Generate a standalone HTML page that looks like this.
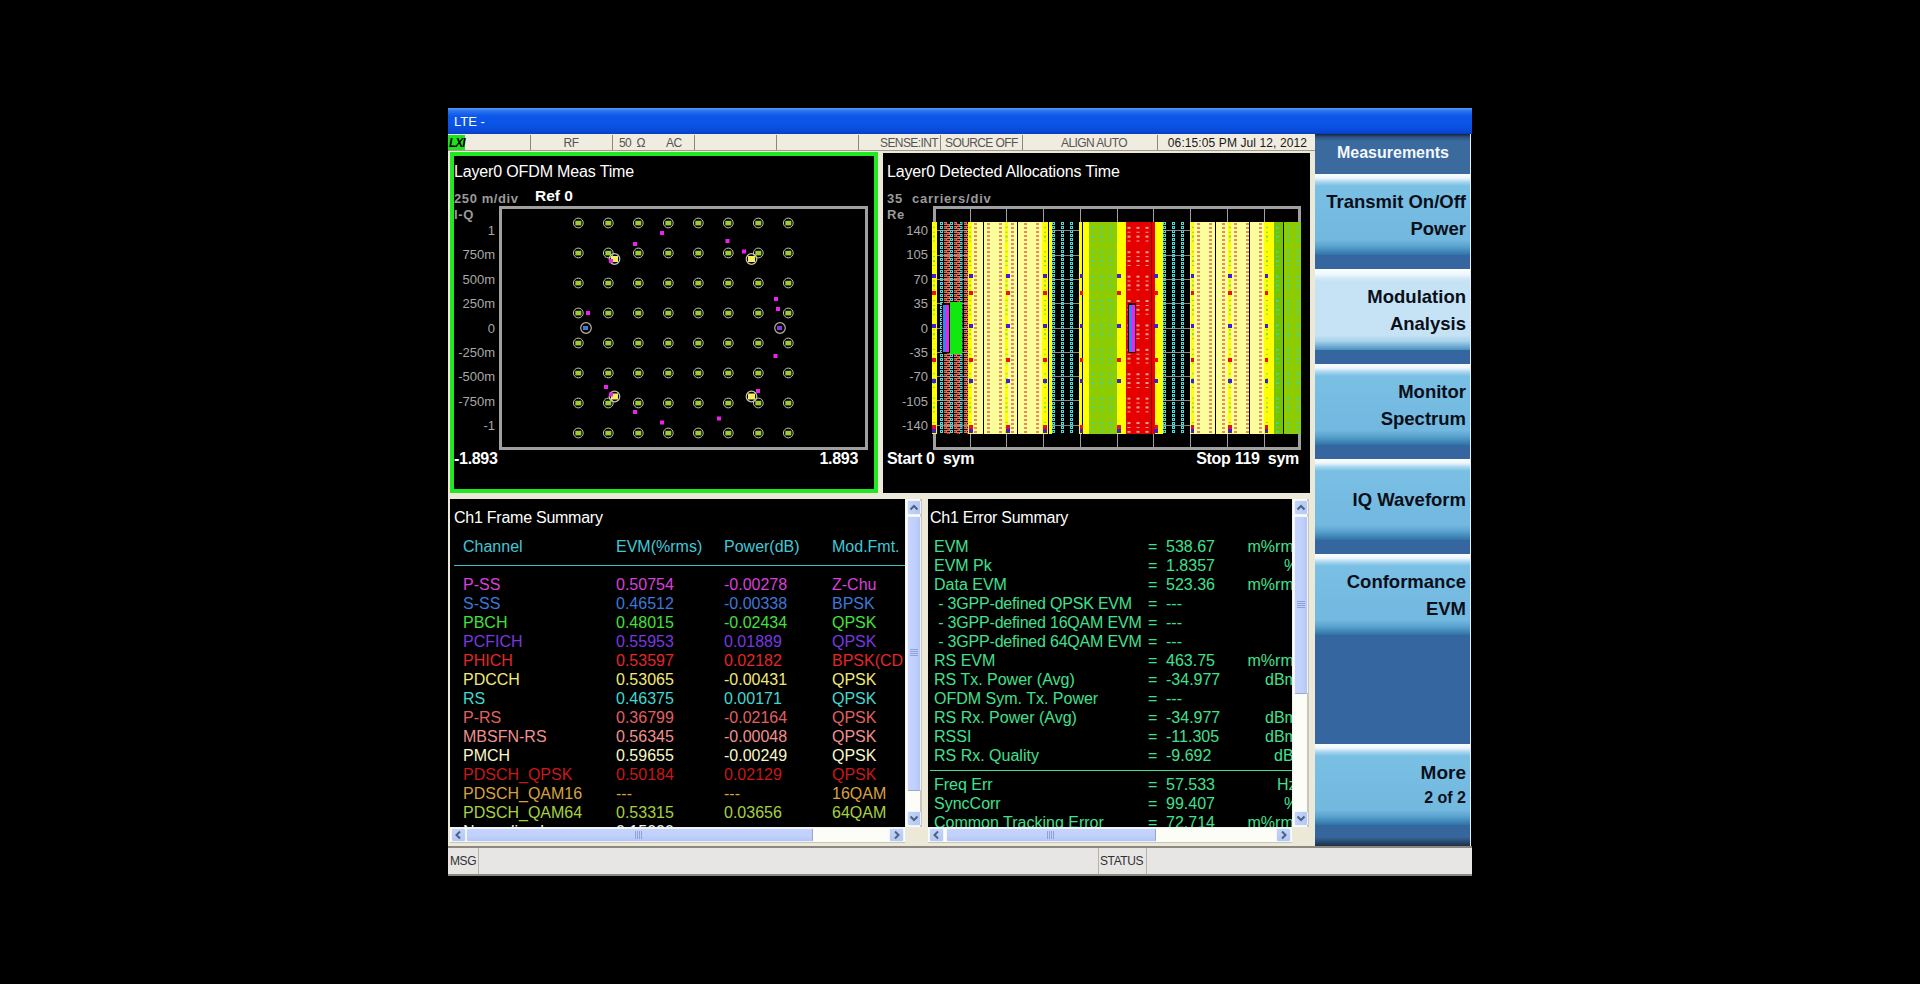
<!DOCTYPE html><html><head><meta charset="utf-8"><style>
html,body{margin:0;padding:0;background:#000;}
body{width:1920px;height:984px;position:relative;overflow:hidden;font-family:"Liberation Sans",sans-serif;}
.t{position:absolute;white-space:nowrap;}
.r{position:absolute;box-sizing:border-box;}
svg{position:absolute;}
</style></head><body>
<div class="r" style="left:448px;top:108px;width:1024px;height:26px;background:linear-gradient(#5a9af8 0px,#2a72f0 3px,#0c58ea 8px,#0a52e4 18px,#0846d4 24px,#0a3cb8 26px);"></div>
<div class="t" style="left:454px;top:115.00px;font-size:13px;line-height:13px;color:#fff;font-weight:normal;">LTE -</div>
<div class="r" style="left:448px;top:134px;width:867px;height:713px;background:#ece9d8;"></div>
<div class="r" style="left:448px;top:134px;width:867px;height:17px;background:#f1ece0;border-bottom:1px solid #a09a8c;"></div>
<div class="r" style="left:448px;top:135px;width:17px;height:15px;background:#1fe21f;"></div>
<div class="t" style="left:449px;top:136.84px;font-size:12px;line-height:12px;color:#000;font-weight:bold;letter-spacing:-1px;"><i>LXI</i></div>
<div class="r" style="left:530px;top:135px;width:1px;height:15px;background:#8c8778;"></div>
<div class="r" style="left:612px;top:135px;width:1px;height:15px;background:#8c8778;"></div>
<div class="r" style="left:694px;top:135px;width:1px;height:15px;background:#8c8778;"></div>
<div class="r" style="left:776px;top:135px;width:1px;height:15px;background:#8c8778;"></div>
<div class="r" style="left:858px;top:135px;width:1px;height:15px;background:#8c8778;"></div>
<div class="r" style="left:940px;top:135px;width:1px;height:15px;background:#8c8778;"></div>
<div class="r" style="left:1022px;top:135px;width:1px;height:15px;background:#8c8778;"></div>
<div class="r" style="left:1157px;top:135px;width:1px;height:15px;background:#8c8778;"></div>
<div class="t" style="left:371px;width:400px;text-align:center;top:136.84px;font-size:12px;line-height:12px;color:#555;font-weight:normal;letter-spacing:-0.6px;">RF</div>
<div class="t" style="left:619px;top:136.84px;font-size:12px;line-height:12px;color:#555;font-weight:normal;letter-spacing:-0.6px;">50&nbsp; Ω</div>
<div class="t" style="left:666px;top:136.84px;font-size:12px;line-height:12px;color:#555;font-weight:normal;letter-spacing:-0.6px;">AC</div>
<div class="t" style="right:982px;top:136.84px;font-size:12px;line-height:12px;color:#555;font-weight:normal;letter-spacing:-0.6px;">SENSE:INT</div>
<div class="t" style="left:945px;top:136.84px;font-size:12px;line-height:12px;color:#555;font-weight:normal;letter-spacing:-0.6px;">SOURCE OFF</div>
<div class="t" style="left:894px;width:400px;text-align:center;top:136.84px;font-size:12px;line-height:12px;color:#555;font-weight:normal;letter-spacing:-0.6px;">ALIGN AUTO</div>
<div class="t" style="right:613px;top:136.84px;font-size:12px;line-height:12px;color:#181818;font-weight:normal;letter-spacing:0.1px;">06:15:05 PM Jul 12, 2012</div>
<div class="r" style="left:450px;top:152px;width:428px;height:341px;background:#000;border:4px solid #22e822;"></div>
<div class="t" style="left:454px;top:164.46px;font-size:16px;line-height:16px;color:#fff;font-weight:normal;letter-spacing:-0.15px;">Layer0 OFDM Meas Time</div>
<div class="t" style="left:454px;top:192.00px;font-size:13px;line-height:13px;color:#9a9a9a;font-weight:bold;letter-spacing:0.6px;">250 m/div</div>
<div class="t" style="left:535px;top:187.88px;font-size:15.5px;line-height:15.5px;color:#fff;font-weight:bold;">Ref 0</div>
<div class="t" style="left:454px;top:208.00px;font-size:13px;line-height:13px;color:#9a9a9a;font-weight:bold;letter-spacing:0.6px;">I-Q</div>
<div class="t" style="right:1425px;top:224.00px;font-size:13px;line-height:13px;color:#a8a8a8;font-weight:normal;">1</div>
<div class="t" style="right:1425px;top:248.40px;font-size:13px;line-height:13px;color:#a8a8a8;font-weight:normal;">750m</div>
<div class="t" style="right:1425px;top:272.80px;font-size:13px;line-height:13px;color:#a8a8a8;font-weight:normal;">500m</div>
<div class="t" style="right:1425px;top:297.20px;font-size:13px;line-height:13px;color:#a8a8a8;font-weight:normal;">250m</div>
<div class="t" style="right:1425px;top:321.60px;font-size:13px;line-height:13px;color:#a8a8a8;font-weight:normal;">0</div>
<div class="t" style="right:1425px;top:346.00px;font-size:13px;line-height:13px;color:#a8a8a8;font-weight:normal;">-250m</div>
<div class="t" style="right:1425px;top:370.40px;font-size:13px;line-height:13px;color:#a8a8a8;font-weight:normal;">-500m</div>
<div class="t" style="right:1425px;top:394.80px;font-size:13px;line-height:13px;color:#a8a8a8;font-weight:normal;">-750m</div>
<div class="t" style="right:1425px;top:419.20px;font-size:13px;line-height:13px;color:#a8a8a8;font-weight:normal;">-1</div>
<div class="t" style="left:454px;top:451.46px;font-size:16px;line-height:16px;color:#fff;font-weight:bold;letter-spacing:-0.3px;">-1.893</div>
<div class="t" style="right:1062px;top:451.46px;font-size:16px;line-height:16px;color:#fff;font-weight:bold;letter-spacing:-0.3px;">1.893</div>
<svg style="left:0;top:0" width="1920" height="984" viewBox="0 0 1920 984"><rect x="500.5" y="207.5" width="366" height="241" fill="none" stroke="#a0a0a0" stroke-width="3"/><circle cx="578.3" cy="223" r="4.9" fill="none" stroke="#c0c0b4" stroke-width="1"/><rect x="575.3" y="220.8" width="6" height="4.6" fill="#9ccc30"/><circle cx="608.3" cy="223" r="4.9" fill="none" stroke="#c0c0b4" stroke-width="1"/><rect x="605.3" y="220.8" width="6" height="4.6" fill="#9ccc30"/><circle cx="638.3" cy="223" r="4.9" fill="none" stroke="#c0c0b4" stroke-width="1"/><rect x="635.3" y="220.8" width="6" height="4.6" fill="#9ccc30"/><circle cx="668.3" cy="223" r="4.9" fill="none" stroke="#c0c0b4" stroke-width="1"/><rect x="665.3" y="220.8" width="6" height="4.6" fill="#9ccc30"/><circle cx="698.3" cy="223" r="4.9" fill="none" stroke="#c0c0b4" stroke-width="1"/><rect x="695.3" y="220.8" width="6" height="4.6" fill="#9ccc30"/><circle cx="728.3" cy="223" r="4.9" fill="none" stroke="#c0c0b4" stroke-width="1"/><rect x="725.3" y="220.8" width="6" height="4.6" fill="#9ccc30"/><circle cx="758.3" cy="223" r="4.9" fill="none" stroke="#c0c0b4" stroke-width="1"/><rect x="755.3" y="220.8" width="6" height="4.6" fill="#9ccc30"/><circle cx="788.3" cy="223" r="4.9" fill="none" stroke="#c0c0b4" stroke-width="1"/><rect x="785.3" y="220.8" width="6" height="4.6" fill="#9ccc30"/><circle cx="578.3" cy="253" r="4.9" fill="none" stroke="#c0c0b4" stroke-width="1"/><rect x="575.3" y="250.8" width="6" height="4.6" fill="#9ccc30"/><circle cx="608.3" cy="253" r="4.9" fill="none" stroke="#c0c0b4" stroke-width="1"/><rect x="605.3" y="250.8" width="6" height="4.6" fill="#9ccc30"/><circle cx="638.3" cy="253" r="4.9" fill="none" stroke="#c0c0b4" stroke-width="1"/><rect x="635.3" y="250.8" width="6" height="4.6" fill="#9ccc30"/><circle cx="668.3" cy="253" r="4.9" fill="none" stroke="#c0c0b4" stroke-width="1"/><rect x="665.3" y="250.8" width="6" height="4.6" fill="#9ccc30"/><circle cx="698.3" cy="253" r="4.9" fill="none" stroke="#c0c0b4" stroke-width="1"/><rect x="695.3" y="250.8" width="6" height="4.6" fill="#9ccc30"/><circle cx="728.3" cy="253" r="4.9" fill="none" stroke="#c0c0b4" stroke-width="1"/><rect x="725.3" y="250.8" width="6" height="4.6" fill="#9ccc30"/><circle cx="758.3" cy="253" r="4.9" fill="none" stroke="#c0c0b4" stroke-width="1"/><rect x="755.3" y="250.8" width="6" height="4.6" fill="#9ccc30"/><circle cx="788.3" cy="253" r="4.9" fill="none" stroke="#c0c0b4" stroke-width="1"/><rect x="785.3" y="250.8" width="6" height="4.6" fill="#9ccc30"/><circle cx="578.3" cy="283" r="4.9" fill="none" stroke="#c0c0b4" stroke-width="1"/><rect x="575.3" y="280.8" width="6" height="4.6" fill="#9ccc30"/><circle cx="608.3" cy="283" r="4.9" fill="none" stroke="#c0c0b4" stroke-width="1"/><rect x="605.3" y="280.8" width="6" height="4.6" fill="#9ccc30"/><circle cx="638.3" cy="283" r="4.9" fill="none" stroke="#c0c0b4" stroke-width="1"/><rect x="635.3" y="280.8" width="6" height="4.6" fill="#9ccc30"/><circle cx="668.3" cy="283" r="4.9" fill="none" stroke="#c0c0b4" stroke-width="1"/><rect x="665.3" y="280.8" width="6" height="4.6" fill="#9ccc30"/><circle cx="698.3" cy="283" r="4.9" fill="none" stroke="#c0c0b4" stroke-width="1"/><rect x="695.3" y="280.8" width="6" height="4.6" fill="#9ccc30"/><circle cx="728.3" cy="283" r="4.9" fill="none" stroke="#c0c0b4" stroke-width="1"/><rect x="725.3" y="280.8" width="6" height="4.6" fill="#9ccc30"/><circle cx="758.3" cy="283" r="4.9" fill="none" stroke="#c0c0b4" stroke-width="1"/><rect x="755.3" y="280.8" width="6" height="4.6" fill="#9ccc30"/><circle cx="788.3" cy="283" r="4.9" fill="none" stroke="#c0c0b4" stroke-width="1"/><rect x="785.3" y="280.8" width="6" height="4.6" fill="#9ccc30"/><circle cx="578.3" cy="313" r="4.9" fill="none" stroke="#c0c0b4" stroke-width="1"/><rect x="575.3" y="310.8" width="6" height="4.6" fill="#9ccc30"/><circle cx="608.3" cy="313" r="4.9" fill="none" stroke="#c0c0b4" stroke-width="1"/><rect x="605.3" y="310.8" width="6" height="4.6" fill="#9ccc30"/><circle cx="638.3" cy="313" r="4.9" fill="none" stroke="#c0c0b4" stroke-width="1"/><rect x="635.3" y="310.8" width="6" height="4.6" fill="#9ccc30"/><circle cx="668.3" cy="313" r="4.9" fill="none" stroke="#c0c0b4" stroke-width="1"/><rect x="665.3" y="310.8" width="6" height="4.6" fill="#9ccc30"/><circle cx="698.3" cy="313" r="4.9" fill="none" stroke="#c0c0b4" stroke-width="1"/><rect x="695.3" y="310.8" width="6" height="4.6" fill="#9ccc30"/><circle cx="728.3" cy="313" r="4.9" fill="none" stroke="#c0c0b4" stroke-width="1"/><rect x="725.3" y="310.8" width="6" height="4.6" fill="#9ccc30"/><circle cx="758.3" cy="313" r="4.9" fill="none" stroke="#c0c0b4" stroke-width="1"/><rect x="755.3" y="310.8" width="6" height="4.6" fill="#9ccc30"/><circle cx="788.3" cy="313" r="4.9" fill="none" stroke="#c0c0b4" stroke-width="1"/><rect x="785.3" y="310.8" width="6" height="4.6" fill="#9ccc30"/><circle cx="578.3" cy="343" r="4.9" fill="none" stroke="#c0c0b4" stroke-width="1"/><rect x="575.3" y="340.8" width="6" height="4.6" fill="#9ccc30"/><circle cx="608.3" cy="343" r="4.9" fill="none" stroke="#c0c0b4" stroke-width="1"/><rect x="605.3" y="340.8" width="6" height="4.6" fill="#9ccc30"/><circle cx="638.3" cy="343" r="4.9" fill="none" stroke="#c0c0b4" stroke-width="1"/><rect x="635.3" y="340.8" width="6" height="4.6" fill="#9ccc30"/><circle cx="668.3" cy="343" r="4.9" fill="none" stroke="#c0c0b4" stroke-width="1"/><rect x="665.3" y="340.8" width="6" height="4.6" fill="#9ccc30"/><circle cx="698.3" cy="343" r="4.9" fill="none" stroke="#c0c0b4" stroke-width="1"/><rect x="695.3" y="340.8" width="6" height="4.6" fill="#9ccc30"/><circle cx="728.3" cy="343" r="4.9" fill="none" stroke="#c0c0b4" stroke-width="1"/><rect x="725.3" y="340.8" width="6" height="4.6" fill="#9ccc30"/><circle cx="758.3" cy="343" r="4.9" fill="none" stroke="#c0c0b4" stroke-width="1"/><rect x="755.3" y="340.8" width="6" height="4.6" fill="#9ccc30"/><circle cx="788.3" cy="343" r="4.9" fill="none" stroke="#c0c0b4" stroke-width="1"/><rect x="785.3" y="340.8" width="6" height="4.6" fill="#9ccc30"/><circle cx="578.3" cy="373" r="4.9" fill="none" stroke="#c0c0b4" stroke-width="1"/><rect x="575.3" y="370.8" width="6" height="4.6" fill="#9ccc30"/><circle cx="608.3" cy="373" r="4.9" fill="none" stroke="#c0c0b4" stroke-width="1"/><rect x="605.3" y="370.8" width="6" height="4.6" fill="#9ccc30"/><circle cx="638.3" cy="373" r="4.9" fill="none" stroke="#c0c0b4" stroke-width="1"/><rect x="635.3" y="370.8" width="6" height="4.6" fill="#9ccc30"/><circle cx="668.3" cy="373" r="4.9" fill="none" stroke="#c0c0b4" stroke-width="1"/><rect x="665.3" y="370.8" width="6" height="4.6" fill="#9ccc30"/><circle cx="698.3" cy="373" r="4.9" fill="none" stroke="#c0c0b4" stroke-width="1"/><rect x="695.3" y="370.8" width="6" height="4.6" fill="#9ccc30"/><circle cx="728.3" cy="373" r="4.9" fill="none" stroke="#c0c0b4" stroke-width="1"/><rect x="725.3" y="370.8" width="6" height="4.6" fill="#9ccc30"/><circle cx="758.3" cy="373" r="4.9" fill="none" stroke="#c0c0b4" stroke-width="1"/><rect x="755.3" y="370.8" width="6" height="4.6" fill="#9ccc30"/><circle cx="788.3" cy="373" r="4.9" fill="none" stroke="#c0c0b4" stroke-width="1"/><rect x="785.3" y="370.8" width="6" height="4.6" fill="#9ccc30"/><circle cx="578.3" cy="403" r="4.9" fill="none" stroke="#c0c0b4" stroke-width="1"/><rect x="575.3" y="400.8" width="6" height="4.6" fill="#9ccc30"/><circle cx="608.3" cy="403" r="4.9" fill="none" stroke="#c0c0b4" stroke-width="1"/><rect x="605.3" y="400.8" width="6" height="4.6" fill="#9ccc30"/><circle cx="638.3" cy="403" r="4.9" fill="none" stroke="#c0c0b4" stroke-width="1"/><rect x="635.3" y="400.8" width="6" height="4.6" fill="#9ccc30"/><circle cx="668.3" cy="403" r="4.9" fill="none" stroke="#c0c0b4" stroke-width="1"/><rect x="665.3" y="400.8" width="6" height="4.6" fill="#9ccc30"/><circle cx="698.3" cy="403" r="4.9" fill="none" stroke="#c0c0b4" stroke-width="1"/><rect x="695.3" y="400.8" width="6" height="4.6" fill="#9ccc30"/><circle cx="728.3" cy="403" r="4.9" fill="none" stroke="#c0c0b4" stroke-width="1"/><rect x="725.3" y="400.8" width="6" height="4.6" fill="#9ccc30"/><circle cx="758.3" cy="403" r="4.9" fill="none" stroke="#c0c0b4" stroke-width="1"/><rect x="755.3" y="400.8" width="6" height="4.6" fill="#9ccc30"/><circle cx="788.3" cy="403" r="4.9" fill="none" stroke="#c0c0b4" stroke-width="1"/><rect x="785.3" y="400.8" width="6" height="4.6" fill="#9ccc30"/><circle cx="578.3" cy="433" r="4.9" fill="none" stroke="#c0c0b4" stroke-width="1"/><rect x="575.3" y="430.8" width="6" height="4.6" fill="#9ccc30"/><circle cx="608.3" cy="433" r="4.9" fill="none" stroke="#c0c0b4" stroke-width="1"/><rect x="605.3" y="430.8" width="6" height="4.6" fill="#9ccc30"/><circle cx="638.3" cy="433" r="4.9" fill="none" stroke="#c0c0b4" stroke-width="1"/><rect x="635.3" y="430.8" width="6" height="4.6" fill="#9ccc30"/><circle cx="668.3" cy="433" r="4.9" fill="none" stroke="#c0c0b4" stroke-width="1"/><rect x="665.3" y="430.8" width="6" height="4.6" fill="#9ccc30"/><circle cx="698.3" cy="433" r="4.9" fill="none" stroke="#c0c0b4" stroke-width="1"/><rect x="695.3" y="430.8" width="6" height="4.6" fill="#9ccc30"/><circle cx="728.3" cy="433" r="4.9" fill="none" stroke="#c0c0b4" stroke-width="1"/><rect x="725.3" y="430.8" width="6" height="4.6" fill="#9ccc30"/><circle cx="758.3" cy="433" r="4.9" fill="none" stroke="#c0c0b4" stroke-width="1"/><rect x="755.3" y="430.8" width="6" height="4.6" fill="#9ccc30"/><circle cx="788.3" cy="433" r="4.9" fill="none" stroke="#c0c0b4" stroke-width="1"/><rect x="785.3" y="430.8" width="6" height="4.6" fill="#9ccc30"/><circle cx="586" cy="328" r="5.3" fill="none" stroke="#b4b4a8" stroke-width="1.2"/><rect x="583" y="326" width="5" height="4" fill="#3a7ae0"/><circle cx="780" cy="328" r="5.3" fill="none" stroke="#b4b4a8" stroke-width="1.2"/><rect x="777" y="326" width="5" height="4" fill="#8a3ad0"/><circle cx="614.5" cy="259" r="5.3" fill="none" stroke="#c8c8b0" stroke-width="1.2"/><rect x="611.0" y="256" width="7" height="6" fill="#f4f060"/><circle cx="751.5" cy="259" r="5.3" fill="none" stroke="#c8c8b0" stroke-width="1.2"/><rect x="748.0" y="256" width="7" height="6" fill="#f4f060"/><circle cx="614.5" cy="396.5" r="5.3" fill="none" stroke="#c8c8b0" stroke-width="1.2"/><rect x="611.0" y="393.5" width="7" height="6" fill="#f4f060"/><circle cx="751.5" cy="396.5" r="5.3" fill="none" stroke="#c8c8b0" stroke-width="1.2"/><rect x="748.0" y="393.5" width="7" height="6" fill="#f4f060"/><rect x="660" y="231" width="4" height="4" fill="#f020f0"/><rect x="633" y="242" width="4" height="4" fill="#f020f0"/><rect x="725.5" y="239" width="4" height="4" fill="#f020f0"/><rect x="742" y="249.5" width="4" height="4" fill="#f020f0"/><rect x="609" y="259" width="4" height="4" fill="#f020f0"/><rect x="586" y="311" width="4" height="4" fill="#f020f0"/><rect x="774" y="297" width="4" height="4" fill="#f020f0"/><rect x="776" y="307" width="4" height="4" fill="#f020f0"/><rect x="773.5" y="354" width="4" height="4" fill="#f020f0"/><rect x="604" y="385" width="4" height="4" fill="#f020f0"/><rect x="756" y="389" width="4" height="4" fill="#f020f0"/><rect x="633" y="410" width="4" height="4" fill="#f020f0"/><rect x="660" y="420.5" width="4" height="4" fill="#f020f0"/><rect x="717" y="416.5" width="4" height="4" fill="#f020f0"/><rect x="609" y="392.5" width="4" height="4" fill="#f020f0"/></svg>
<div class="r" style="left:883px;top:153px;width:427px;height:340px;background:#000;"></div>
<div class="t" style="left:887px;top:164.46px;font-size:16px;line-height:16px;color:#fff;font-weight:normal;letter-spacing:-0.15px;">Layer0 Detected Allocations Time</div>
<div class="t" style="left:887px;top:192.00px;font-size:13px;line-height:13px;color:#9a9a9a;font-weight:bold;letter-spacing:0.8px;">35&nbsp; carriers/div</div>
<div class="t" style="left:887px;top:208.00px;font-size:13px;line-height:13px;color:#9a9a9a;font-weight:bold;letter-spacing:0.6px;">Re</div>
<div class="t" style="right:992px;top:224.00px;font-size:13px;line-height:13px;color:#a8a8a8;font-weight:normal;">140</div>
<div class="t" style="right:992px;top:248.40px;font-size:13px;line-height:13px;color:#a8a8a8;font-weight:normal;">105</div>
<div class="t" style="right:992px;top:272.80px;font-size:13px;line-height:13px;color:#a8a8a8;font-weight:normal;">70</div>
<div class="t" style="right:992px;top:297.20px;font-size:13px;line-height:13px;color:#a8a8a8;font-weight:normal;">35</div>
<div class="t" style="right:992px;top:321.60px;font-size:13px;line-height:13px;color:#a8a8a8;font-weight:normal;">0</div>
<div class="t" style="right:992px;top:346.00px;font-size:13px;line-height:13px;color:#a8a8a8;font-weight:normal;">-35</div>
<div class="t" style="right:992px;top:370.40px;font-size:13px;line-height:13px;color:#a8a8a8;font-weight:normal;">-70</div>
<div class="t" style="right:992px;top:394.80px;font-size:13px;line-height:13px;color:#a8a8a8;font-weight:normal;">-105</div>
<div class="t" style="right:992px;top:419.20px;font-size:13px;line-height:13px;color:#a8a8a8;font-weight:normal;">-140</div>
<div class="t" style="left:887px;top:451.46px;font-size:16px;line-height:16px;color:#fff;font-weight:bold;letter-spacing:-0.3px;">Start 0&nbsp; sym</div>
<div class="t" style="right:621px;top:451.46px;font-size:16px;line-height:16px;color:#fff;font-weight:bold;letter-spacing:-0.3px;">Stop 119&nbsp; sym</div>
<svg style="left:0;top:0" width="1920" height="984" viewBox="0 0 1920 984" shape-rendering="crispEdges"><defs>
<pattern id="pSal" width="3" height="4" patternUnits="userSpaceOnUse"><rect x="0" y="0.8" width="3" height="2" fill="#e48c5c"/></pattern>
<pattern id="pCy" width="4" height="4" patternUnits="userSpaceOnUse"><rect x="0" y="0" width="3.4" height="3.4" fill="#40e0e0"/><rect x="1.2" y="1.2" width="1.1" height="1.1" fill="#000"/></pattern>
<pattern id="pDs" width="3" height="4" patternUnits="userSpaceOnUse"><rect x="0" y="0" width="3" height="3.2" fill="#f06a50"/><rect x="1" y="1.1" width="1" height="1" fill="#000"/></pattern>
<pattern id="pGd" width="4" height="24.4" patternUnits="userSpaceOnUse"><rect x="0.5" y="5" width="3" height="1.5" fill="#4cd48c"/><rect x="0.5" y="9.5" width="3" height="1.5" fill="#4cd48c"/><rect x="0.5" y="14" width="3" height="1.5" fill="#4cd48c"/><rect x="0.5" y="18.5" width="3" height="1.5" fill="#4cd48c"/></pattern>
<pattern id="pRd" width="4" height="24.4" patternUnits="userSpaceOnUse"><rect x="0.5" y="5" width="3" height="1.5" fill="#dca89c"/><rect x="0.5" y="9.5" width="3" height="1.5" fill="#dca89c"/><rect x="0.5" y="14" width="3" height="1.5" fill="#dca89c"/><rect x="0.5" y="18.5" width="3" height="1.5" fill="#dca89c"/></pattern>
<pattern id="pGy" width="3" height="24.4" patternUnits="userSpaceOnUse"><rect x="0.5" y="5" width="2" height="1.2" fill="#70d860"/><rect x="0.5" y="9.5" width="2" height="1.2" fill="#70d860"/><rect x="0.5" y="14" width="2" height="1.2" fill="#70d860"/><rect x="0.5" y="18.5" width="2" height="1.2" fill="#70d860"/></pattern>
</defs><rect x="934.5" y="207.5" width="365" height="241" fill="none" stroke="#a0a0a0" stroke-width="3"/><rect x="969.5" y="209" width="1" height="238" fill="#a0a0a0" /><rect x="1006" y="209" width="1" height="238" fill="#a0a0a0" /><rect x="1042.5" y="209" width="1" height="238" fill="#a0a0a0" /><rect x="1079.5" y="209" width="1" height="238" fill="#a0a0a0" /><rect x="1116.5" y="209" width="1" height="238" fill="#a0a0a0" /><rect x="1153" y="209" width="1" height="238" fill="#a0a0a0" /><rect x="1190" y="209" width="1" height="238" fill="#a0a0a0" /><rect x="1226.5" y="209" width="1" height="238" fill="#a0a0a0" /><rect x="1263.5" y="209" width="1" height="238" fill="#a0a0a0" /><rect x="932" y="222" width="5" height="212" fill="#ffff00" /><rect transform="translate(932,222)" x="0" y="0" width="4" height="212" fill="url(#pGy)"/><rect x="937" y="222" width="31" height="212" fill="#000" /><rect transform="translate(943.5,222)" x="0" y="0" width="3" height="212" fill="url(#pDs)"/><rect transform="translate(946.5,224)" x="0" y="0" width="3" height="210" fill="url(#pDs)"/><rect transform="translate(953.5,222)" x="0" y="0" width="3" height="212" fill="url(#pDs)"/><rect transform="translate(956.5,224)" x="0" y="0" width="3" height="210" fill="url(#pDs)"/><rect transform="translate(963.5,222)" x="0" y="0" width="3" height="212" fill="url(#pDs)"/><rect transform="translate(966.5,224)" x="0" y="0" width="3" height="210" fill="url(#pDs)"/><rect transform="translate(940,222)" x="0" y="0" width="3.5" height="212" fill="url(#pCy)"/><rect transform="translate(950,222)" x="0" y="0" width="3.5" height="212" fill="url(#pCy)"/><rect transform="translate(959.5,222)" x="0" y="0" width="3.5" height="212" fill="url(#pCy)"/><rect x="968" y="222" width="81" height="212" fill="#fdfd9c" /><rect x="968" y="222" width="4" height="212" fill="#ffff00" /><rect transform="translate(968,222)" x="0" y="0" width="4" height="212" fill="url(#pGy)"/><rect x="1004.5" y="222" width="3.5" height="212" fill="#ffff00" /><rect transform="translate(1004.5,222)" x="0" y="0" width="3.5" height="212" fill="url(#pGy)"/><rect x="1042" y="222" width="6" height="212" fill="#ffff00" /><rect transform="translate(1043,222)" x="0" y="0" width="4" height="212" fill="url(#pGy)"/><rect x="983.3" y="222" width="1.1" height="212" fill="#000" /><rect x="1017.2" y="222" width="1.1" height="212" fill="#000" /><rect x="1048.2" y="222" width="1.1" height="212" fill="#000" /><rect transform="translate(974,222)" x="0" y="0" width="3" height="212" fill="url(#pSal)"/><rect transform="translate(987,222)" x="0" y="0" width="3" height="212" fill="url(#pSal)"/><rect transform="translate(999,222)" x="0" y="0" width="3" height="212" fill="url(#pSal)"/><rect transform="translate(1011,222)" x="0" y="0" width="3" height="212" fill="url(#pSal)"/><rect transform="translate(1024,222)" x="0" y="0" width="3" height="212" fill="url(#pSal)"/><rect transform="translate(1036,222)" x="0" y="0" width="3" height="212" fill="url(#pSal)"/><rect x="1049" y="222" width="3" height="212" fill="#ffff00" /><rect x="1052" y="222" width="27" height="212" fill="#000" /><rect transform="translate(1052,222)" x="0" y="0" width="4" height="212" fill="url(#pCy)"/><rect transform="translate(1061,222)" x="0" y="0" width="4" height="212" fill="url(#pCy)"/><rect transform="translate(1070,222)" x="0" y="0" width="4" height="212" fill="url(#pCy)"/><rect x="1079" y="222" width="3" height="212" fill="#ffff00" /><rect x="1082" y="222" width="1" height="212" fill="#000" /><rect x="1083" y="222" width="6" height="212" fill="#ffff00" /><rect x="1089" y="222" width="27.5" height="212" fill="#8ccc00" /><rect transform="translate(1090,222)" x="0" y="0" width="4" height="212" fill="url(#pGd)"/><rect transform="translate(1099,222)" x="0" y="0" width="4" height="212" fill="url(#pGd)"/><rect transform="translate(1108,222)" x="0" y="0" width="4" height="212" fill="url(#pGd)"/><rect x="1116.5" y="222" width="9.5" height="212" fill="#ffff00" /><rect x="1126" y="222" width="28.5" height="212" fill="#e60000" /><rect x="1150.5" y="222" width="1.5" height="212" fill="#700000" /><rect transform="translate(1126.5,222)" x="0" y="0" width="4" height="212" fill="url(#pRd)"/><rect transform="translate(1135.5,222)" x="0" y="0" width="4" height="212" fill="url(#pRd)"/><rect transform="translate(1144.5,222)" x="0" y="0" width="4" height="212" fill="url(#pRd)"/><rect x="1154.5" y="222" width="8.5" height="212" fill="#ffff00" /><rect x="1163" y="222" width="27" height="212" fill="#000" /><rect transform="translate(1163,222)" x="0" y="0" width="4" height="212" fill="url(#pCy)"/><rect transform="translate(1172,222)" x="0" y="0" width="4" height="212" fill="url(#pCy)"/><rect transform="translate(1181,222)" x="0" y="0" width="4" height="212" fill="url(#pCy)"/><rect x="1190" y="222" width="74" height="212" fill="#fdfd9c" /><rect x="1190.5" y="222" width="3.5" height="212" fill="#ffff00" /><rect transform="translate(1191,222)" x="0" y="0" width="3" height="212" fill="url(#pGy)"/><rect x="1228" y="222" width="3" height="212" fill="#ffff00" /><rect transform="translate(1228,222)" x="0" y="0" width="3" height="212" fill="url(#pGy)"/><rect x="1215" y="222" width="1.1" height="212" fill="#000" /><rect x="1249" y="222" width="1.1" height="212" fill="#000" /><rect transform="translate(1197,222)" x="0" y="0" width="3" height="212" fill="url(#pSal)"/><rect transform="translate(1209,222)" x="0" y="0" width="3" height="212" fill="url(#pSal)"/><rect transform="translate(1222,222)" x="0" y="0" width="3" height="212" fill="url(#pSal)"/><rect transform="translate(1234,222)" x="0" y="0" width="3" height="212" fill="url(#pSal)"/><rect transform="translate(1246,222)" x="0" y="0" width="3" height="212" fill="url(#pSal)"/><rect transform="translate(1259,222)" x="0" y="0" width="3" height="212" fill="url(#pSal)"/><rect x="1264" y="222" width="10" height="212" fill="#ffff00" /><rect transform="translate(1265,222)" x="0" y="0" width="3" height="212" fill="url(#pGy)"/><rect x="1274" y="222" width="9" height="212" fill="#74c400" /><rect x="1283" y="222" width="1" height="212" fill="#000" /><rect x="1284" y="222" width="17" height="212" fill="#8ccc00" /><rect transform="translate(1275,222)" x="0" y="0" width="4" height="212" fill="url(#pGd)"/><rect transform="translate(1286,222)" x="0" y="0" width="4" height="212" fill="url(#pGd)"/><rect transform="translate(1295,222)" x="0" y="0" width="4" height="212" fill="url(#pGd)"/><rect x="937" y="230" width="31" height="1" fill="#a8a8a8" opacity="0.8"/><rect x="1052" y="230" width="27" height="1" fill="#a8a8a8" opacity="0.8"/><rect x="1163" y="230" width="27" height="1" fill="#a8a8a8" opacity="0.8"/><rect x="937" y="255" width="31" height="1" fill="#a8a8a8" opacity="0.8"/><rect x="1052" y="255" width="27" height="1" fill="#a8a8a8" opacity="0.8"/><rect x="1163" y="255" width="27" height="1" fill="#a8a8a8" opacity="0.8"/><rect x="937" y="279" width="31" height="1" fill="#a8a8a8" opacity="0.8"/><rect x="1052" y="279" width="27" height="1" fill="#a8a8a8" opacity="0.8"/><rect x="1163" y="279" width="27" height="1" fill="#a8a8a8" opacity="0.8"/><rect x="937" y="303" width="31" height="1" fill="#a8a8a8" opacity="0.8"/><rect x="1052" y="303" width="27" height="1" fill="#a8a8a8" opacity="0.8"/><rect x="1163" y="303" width="27" height="1" fill="#a8a8a8" opacity="0.8"/><rect x="937" y="328" width="31" height="1" fill="#a8a8a8" opacity="0.8"/><rect x="1052" y="328" width="27" height="1" fill="#a8a8a8" opacity="0.8"/><rect x="1163" y="328" width="27" height="1" fill="#a8a8a8" opacity="0.8"/><rect x="937" y="352" width="31" height="1" fill="#a8a8a8" opacity="0.8"/><rect x="1052" y="352" width="27" height="1" fill="#a8a8a8" opacity="0.8"/><rect x="1163" y="352" width="27" height="1" fill="#a8a8a8" opacity="0.8"/><rect x="937" y="376" width="31" height="1" fill="#a8a8a8" opacity="0.8"/><rect x="1052" y="376" width="27" height="1" fill="#a8a8a8" opacity="0.8"/><rect x="1163" y="376" width="27" height="1" fill="#a8a8a8" opacity="0.8"/><rect x="937" y="400" width="31" height="1" fill="#a8a8a8" opacity="0.8"/><rect x="1052" y="400" width="27" height="1" fill="#a8a8a8" opacity="0.8"/><rect x="1163" y="400" width="27" height="1" fill="#a8a8a8" opacity="0.8"/><rect x="937" y="425" width="31" height="1" fill="#a8a8a8" opacity="0.8"/><rect x="1052" y="425" width="27" height="1" fill="#a8a8a8" opacity="0.8"/><rect x="1163" y="425" width="27" height="1" fill="#a8a8a8" opacity="0.8"/><rect x="942" y="303" width="8" height="50" fill="#000" /><rect x="943" y="304.5" width="3" height="47" fill="#3a80f0" /><rect x="946" y="304.5" width="3" height="47" fill="#f020f0" /><rect x="950" y="302" width="12" height="52" fill="#10e810" /><rect x="1128" y="303" width="8" height="50" fill="#300000" /><rect x="1129" y="304.5" width="3" height="47" fill="#3a80f0" /><rect x="1132" y="304.5" width="3" height="47" fill="#f020f0" /><rect x="932" y="274" width="3.5" height="4" fill="#3c1ed8" /><rect x="932" y="324" width="3.5" height="4" fill="#3c1ed8" /><rect x="932" y="379" width="3.5" height="4" fill="#3c1ed8" /><rect x="932" y="428.5" width="3.5" height="4" fill="#3c1ed8" /><rect x="932" y="291" width="3.5" height="4" fill="#e81010" /><rect x="932" y="358" width="3.5" height="4" fill="#e81010" /><rect x="932" y="424.5" width="3.5" height="4" fill="#e81010" /><rect x="969" y="274" width="3.5" height="4" fill="#3c1ed8" /><rect x="969" y="324" width="3.5" height="4" fill="#3c1ed8" /><rect x="969" y="379" width="3.5" height="4" fill="#3c1ed8" /><rect x="969" y="428.5" width="3.5" height="4" fill="#3c1ed8" /><rect x="969" y="291" width="3.5" height="4" fill="#e81010" /><rect x="969" y="358" width="3.5" height="4" fill="#e81010" /><rect x="969" y="424.5" width="3.5" height="4" fill="#e81010" /><rect x="1006" y="274" width="3.5" height="4" fill="#3c1ed8" /><rect x="1006" y="324" width="3.5" height="4" fill="#3c1ed8" /><rect x="1006" y="379" width="3.5" height="4" fill="#3c1ed8" /><rect x="1006" y="428.5" width="3.5" height="4" fill="#3c1ed8" /><rect x="1006" y="291" width="3.5" height="4" fill="#e81010" /><rect x="1006" y="358" width="3.5" height="4" fill="#e81010" /><rect x="1006" y="424.5" width="3.5" height="4" fill="#e81010" /><rect x="1043" y="274" width="3.5" height="4" fill="#3c1ed8" /><rect x="1043" y="324" width="3.5" height="4" fill="#3c1ed8" /><rect x="1043" y="379" width="3.5" height="4" fill="#3c1ed8" /><rect x="1043" y="428.5" width="3.5" height="4" fill="#3c1ed8" /><rect x="1043" y="291" width="3.5" height="4" fill="#e81010" /><rect x="1043" y="358" width="3.5" height="4" fill="#e81010" /><rect x="1043" y="424.5" width="3.5" height="4" fill="#e81010" /><rect x="1079.5" y="274" width="3.5" height="4" fill="#3c1ed8" /><rect x="1079.5" y="324" width="3.5" height="4" fill="#3c1ed8" /><rect x="1079.5" y="379" width="3.5" height="4" fill="#3c1ed8" /><rect x="1079.5" y="428.5" width="3.5" height="4" fill="#3c1ed8" /><rect x="1079.5" y="291" width="3.5" height="4" fill="#e81010" /><rect x="1079.5" y="358" width="3.5" height="4" fill="#e81010" /><rect x="1079.5" y="424.5" width="3.5" height="4" fill="#e81010" /><rect x="1117" y="274" width="3.5" height="4" fill="#3c1ed8" /><rect x="1117" y="324" width="3.5" height="4" fill="#3c1ed8" /><rect x="1117" y="379" width="3.5" height="4" fill="#3c1ed8" /><rect x="1117" y="428.5" width="3.5" height="4" fill="#3c1ed8" /><rect x="1117" y="291" width="3.5" height="4" fill="#e81010" /><rect x="1117" y="358" width="3.5" height="4" fill="#e81010" /><rect x="1117" y="424.5" width="3.5" height="4" fill="#e81010" /><rect x="1154" y="274" width="3.5" height="4" fill="#3c1ed8" /><rect x="1154" y="324" width="3.5" height="4" fill="#3c1ed8" /><rect x="1154" y="379" width="3.5" height="4" fill="#3c1ed8" /><rect x="1154" y="428.5" width="3.5" height="4" fill="#3c1ed8" /><rect x="1154" y="291" width="3.5" height="4" fill="#e81010" /><rect x="1154" y="358" width="3.5" height="4" fill="#e81010" /><rect x="1154" y="424.5" width="3.5" height="4" fill="#e81010" /><rect x="1190.5" y="274" width="3.5" height="4" fill="#3c1ed8" /><rect x="1190.5" y="324" width="3.5" height="4" fill="#3c1ed8" /><rect x="1190.5" y="379" width="3.5" height="4" fill="#3c1ed8" /><rect x="1190.5" y="428.5" width="3.5" height="4" fill="#3c1ed8" /><rect x="1190.5" y="291" width="3.5" height="4" fill="#e81010" /><rect x="1190.5" y="358" width="3.5" height="4" fill="#e81010" /><rect x="1190.5" y="424.5" width="3.5" height="4" fill="#e81010" /><rect x="1228" y="274" width="3.5" height="4" fill="#3c1ed8" /><rect x="1228" y="324" width="3.5" height="4" fill="#3c1ed8" /><rect x="1228" y="379" width="3.5" height="4" fill="#3c1ed8" /><rect x="1228" y="428.5" width="3.5" height="4" fill="#3c1ed8" /><rect x="1228" y="291" width="3.5" height="4" fill="#e81010" /><rect x="1228" y="358" width="3.5" height="4" fill="#e81010" /><rect x="1228" y="424.5" width="3.5" height="4" fill="#e81010" /><rect x="1264.5" y="274" width="3.5" height="4" fill="#3c1ed8" /><rect x="1264.5" y="324" width="3.5" height="4" fill="#3c1ed8" /><rect x="1264.5" y="379" width="3.5" height="4" fill="#3c1ed8" /><rect x="1264.5" y="428.5" width="3.5" height="4" fill="#3c1ed8" /><rect x="1264.5" y="291" width="3.5" height="4" fill="#e81010" /><rect x="1264.5" y="358" width="3.5" height="4" fill="#e81010" /><rect x="1264.5" y="424.5" width="3.5" height="4" fill="#e81010" /></svg>
<div class="r" style="left:450px;top:499px;width:455px;height:328px;background:#000;"></div>
<div class="t" style="left:454px;top:510.46px;font-size:16px;line-height:16px;color:#fff;font-weight:normal;letter-spacing:-0.25px;">Ch1 Frame Summary</div>
<div class="t" style="left:463px;top:539.46px;font-size:16px;line-height:16px;color:#40c8d8;font-weight:normal;">Channel</div>
<div class="t" style="left:616px;top:539.46px;font-size:16px;line-height:16px;color:#40c8d8;font-weight:normal;">EVM(%rms)</div>
<div class="t" style="left:724px;top:539.46px;font-size:16px;line-height:16px;color:#40c8d8;font-weight:normal;">Power(dB)</div>
<div class="t" style="left:832px;top:539.46px;font-size:16px;line-height:16px;color:#40c8d8;font-weight:normal;">Mod.Fmt.</div>
<div class="r" style="left:454px;top:565px;width:451px;height:1px;background:#38c0c8;"></div>
<div style="position:absolute;left:450px;top:499px;width:455px;height:328px;overflow:hidden">
<div class="t" style="left:13px;top:77.96px;font-size:16px;line-height:16px;color:#d840d8">P-SS</div>
<div class="t" style="left:166px;top:77.96px;font-size:16px;line-height:16px;color:#d840d8">0.50754</div>
<div class="t" style="left:274px;top:77.96px;font-size:16px;line-height:16px;color:#d840d8">-0.00278</div>
<div class="t" style="left:382px;top:77.96px;font-size:16px;line-height:16px;color:#d840d8">Z-Chu</div>
<div class="t" style="left:13px;top:96.96px;font-size:16px;line-height:16px;color:#3c78d8">S-SS</div>
<div class="t" style="left:166px;top:96.96px;font-size:16px;line-height:16px;color:#3c78d8">0.46512</div>
<div class="t" style="left:274px;top:96.96px;font-size:16px;line-height:16px;color:#3c78d8">-0.00338</div>
<div class="t" style="left:382px;top:96.96px;font-size:16px;line-height:16px;color:#3c78d8">BPSK</div>
<div class="t" style="left:13px;top:115.96px;font-size:16px;line-height:16px;color:#40e040">PBCH</div>
<div class="t" style="left:166px;top:115.96px;font-size:16px;line-height:16px;color:#40e040">0.48015</div>
<div class="t" style="left:274px;top:115.96px;font-size:16px;line-height:16px;color:#40e040">-0.02434</div>
<div class="t" style="left:382px;top:115.96px;font-size:16px;line-height:16px;color:#40e040">QPSK</div>
<div class="t" style="left:13px;top:134.96px;font-size:16px;line-height:16px;color:#7838e0">PCFICH</div>
<div class="t" style="left:166px;top:134.96px;font-size:16px;line-height:16px;color:#7838e0">0.55953</div>
<div class="t" style="left:274px;top:134.96px;font-size:16px;line-height:16px;color:#7838e0">0.01889</div>
<div class="t" style="left:382px;top:134.96px;font-size:16px;line-height:16px;color:#7838e0">QPSK</div>
<div class="t" style="left:13px;top:153.96px;font-size:16px;line-height:16px;color:#e02828">PHICH</div>
<div class="t" style="left:166px;top:153.96px;font-size:16px;line-height:16px;color:#e02828">0.53597</div>
<div class="t" style="left:274px;top:153.96px;font-size:16px;line-height:16px;color:#e02828">0.02182</div>
<div class="t" style="left:382px;top:153.96px;font-size:16px;line-height:16px;color:#e02828">BPSK(CD</div>
<div class="t" style="left:13px;top:172.96px;font-size:16px;line-height:16px;color:#f0e878">PDCCH</div>
<div class="t" style="left:166px;top:172.96px;font-size:16px;line-height:16px;color:#f0e878">0.53065</div>
<div class="t" style="left:274px;top:172.96px;font-size:16px;line-height:16px;color:#f0e878">-0.00431</div>
<div class="t" style="left:382px;top:172.96px;font-size:16px;line-height:16px;color:#f0e878">QPSK</div>
<div class="t" style="left:13px;top:191.96px;font-size:16px;line-height:16px;color:#40d8d0">RS</div>
<div class="t" style="left:166px;top:191.96px;font-size:16px;line-height:16px;color:#40d8d0">0.46375</div>
<div class="t" style="left:274px;top:191.96px;font-size:16px;line-height:16px;color:#40d8d0">0.00171</div>
<div class="t" style="left:382px;top:191.96px;font-size:16px;line-height:16px;color:#40d8d0">QPSK</div>
<div class="t" style="left:13px;top:210.96px;font-size:16px;line-height:16px;color:#e06060">P-RS</div>
<div class="t" style="left:166px;top:210.96px;font-size:16px;line-height:16px;color:#e06060">0.36799</div>
<div class="t" style="left:274px;top:210.96px;font-size:16px;line-height:16px;color:#e06060">-0.02164</div>
<div class="t" style="left:382px;top:210.96px;font-size:16px;line-height:16px;color:#e06060">QPSK</div>
<div class="t" style="left:13px;top:229.96px;font-size:16px;line-height:16px;color:#f09090">MBSFN-RS</div>
<div class="t" style="left:166px;top:229.96px;font-size:16px;line-height:16px;color:#f09090">0.56345</div>
<div class="t" style="left:274px;top:229.96px;font-size:16px;line-height:16px;color:#f09090">-0.00048</div>
<div class="t" style="left:382px;top:229.96px;font-size:16px;line-height:16px;color:#f09090">QPSK</div>
<div class="t" style="left:13px;top:248.96px;font-size:16px;line-height:16px;color:#f8f8c8">PMCH</div>
<div class="t" style="left:166px;top:248.96px;font-size:16px;line-height:16px;color:#f8f8c8">0.59655</div>
<div class="t" style="left:274px;top:248.96px;font-size:16px;line-height:16px;color:#f8f8c8">-0.00249</div>
<div class="t" style="left:382px;top:248.96px;font-size:16px;line-height:16px;color:#f8f8c8">QPSK</div>
<div class="t" style="left:13px;top:267.96px;font-size:16px;line-height:16px;color:#c81818">PDSCH_QPSK</div>
<div class="t" style="left:166px;top:267.96px;font-size:16px;line-height:16px;color:#c81818">0.50184</div>
<div class="t" style="left:274px;top:267.96px;font-size:16px;line-height:16px;color:#c81818">0.02129</div>
<div class="t" style="left:382px;top:267.96px;font-size:16px;line-height:16px;color:#c81818">QPSK</div>
<div class="t" style="left:13px;top:286.96px;font-size:16px;line-height:16px;color:#d8a040">PDSCH_QAM16</div>
<div class="t" style="left:166px;top:286.96px;font-size:16px;line-height:16px;color:#d8a040">---</div>
<div class="t" style="left:274px;top:286.96px;font-size:16px;line-height:16px;color:#d8a040">---</div>
<div class="t" style="left:382px;top:286.96px;font-size:16px;line-height:16px;color:#d8a040">16QAM</div>
<div class="t" style="left:13px;top:305.96px;font-size:16px;line-height:16px;color:#a8d040">PDSCH_QAM64</div>
<div class="t" style="left:166px;top:305.96px;font-size:16px;line-height:16px;color:#a8d040">0.53315</div>
<div class="t" style="left:274px;top:305.96px;font-size:16px;line-height:16px;color:#a8d040">0.03656</div>
<div class="t" style="left:382px;top:305.96px;font-size:16px;line-height:16px;color:#a8d040">64QAM</div>
<div class="t" style="left:13px;top:324.96px;font-size:16px;line-height:16px;color:#f0f0f0">Normalized</div>
<div class="t" style="left:166px;top:324.96px;font-size:16px;line-height:16px;color:#f0f0f0">0.15000</div>
<div class="t" style="left:274px;top:324.96px;font-size:16px;line-height:16px;color:#f0f0f0"></div>
<div class="t" style="left:382px;top:324.96px;font-size:16px;line-height:16px;color:#f0f0f0"></div>
</div>
<div class="r" style="left:928px;top:499px;width:364px;height:328px;background:#000;"></div>
<div style="position:absolute;left:928px;top:499px;width:364px;height:328px;overflow:hidden">
<div class="t" style="left:2px;top:11.46px;font-size:16px;line-height:16px;color:#fff;letter-spacing:-0.25px">Ch1 Error Summary</div>
<div class="t" style="left:6px;top:40.46px;font-size:16px;line-height:16px;color:#40e090">EVM</div>
<div class="t" style="left:220px;top:40.46px;font-size:16px;line-height:16px;color:#40e090">=</div>
<div class="t" style="left:238px;top:40.46px;font-size:16px;line-height:16px;color:#40e090">538.67</div>
<div class="t" style="left:6px;top:59.46px;font-size:16px;line-height:16px;color:#40e090">EVM Pk</div>
<div class="t" style="left:220px;top:59.46px;font-size:16px;line-height:16px;color:#40e090">=</div>
<div class="t" style="left:238px;top:59.46px;font-size:16px;line-height:16px;color:#40e090">1.8357</div>
<div class="t" style="left:6px;top:78.46px;font-size:16px;line-height:16px;color:#40e090">Data EVM</div>
<div class="t" style="left:220px;top:78.46px;font-size:16px;line-height:16px;color:#40e090">=</div>
<div class="t" style="left:238px;top:78.46px;font-size:16px;line-height:16px;color:#40e090">523.36</div>
<div class="t" style="left:6px;top:97.46px;font-size:16px;line-height:16px;color:#40e090;letter-spacing:-0.2px">&nbsp;- 3GPP-defined QPSK EVM</div>
<div class="t" style="left:220px;top:97.46px;font-size:16px;line-height:16px;color:#40e090">=</div>
<div class="t" style="left:238px;top:97.46px;font-size:16px;line-height:16px;color:#40e090">---</div>
<div class="t" style="left:6px;top:116.46px;font-size:16px;line-height:16px;color:#40e090;letter-spacing:-0.2px">&nbsp;- 3GPP-defined 16QAM EVM</div>
<div class="t" style="left:220px;top:116.46px;font-size:16px;line-height:16px;color:#40e090">=</div>
<div class="t" style="left:238px;top:116.46px;font-size:16px;line-height:16px;color:#40e090">---</div>
<div class="t" style="left:6px;top:135.46px;font-size:16px;line-height:16px;color:#40e090;letter-spacing:-0.2px">&nbsp;- 3GPP-defined 64QAM EVM</div>
<div class="t" style="left:220px;top:135.46px;font-size:16px;line-height:16px;color:#40e090">=</div>
<div class="t" style="left:238px;top:135.46px;font-size:16px;line-height:16px;color:#40e090">---</div>
<div class="t" style="left:6px;top:154.46px;font-size:16px;line-height:16px;color:#40e090">RS EVM</div>
<div class="t" style="left:220px;top:154.46px;font-size:16px;line-height:16px;color:#40e090">=</div>
<div class="t" style="left:238px;top:154.46px;font-size:16px;line-height:16px;color:#40e090">463.75</div>
<div class="t" style="left:6px;top:173.46px;font-size:16px;line-height:16px;color:#40e090">RS Tx. Power (Avg)</div>
<div class="t" style="left:220px;top:173.46px;font-size:16px;line-height:16px;color:#40e090">=</div>
<div class="t" style="left:238px;top:173.46px;font-size:16px;line-height:16px;color:#40e090">-34.977</div>
<div class="t" style="left:6px;top:192.46px;font-size:16px;line-height:16px;color:#40e090">OFDM Sym. Tx. Power</div>
<div class="t" style="left:220px;top:192.46px;font-size:16px;line-height:16px;color:#40e090">=</div>
<div class="t" style="left:238px;top:192.46px;font-size:16px;line-height:16px;color:#40e090">---</div>
<div class="t" style="left:6px;top:211.46px;font-size:16px;line-height:16px;color:#40e090">RS Rx. Power (Avg)</div>
<div class="t" style="left:220px;top:211.46px;font-size:16px;line-height:16px;color:#40e090">=</div>
<div class="t" style="left:238px;top:211.46px;font-size:16px;line-height:16px;color:#40e090">-34.977</div>
<div class="t" style="left:6px;top:230.46px;font-size:16px;line-height:16px;color:#40e090">RSSI</div>
<div class="t" style="left:220px;top:230.46px;font-size:16px;line-height:16px;color:#40e090">=</div>
<div class="t" style="left:238px;top:230.46px;font-size:16px;line-height:16px;color:#40e090">-11.305</div>
<div class="t" style="left:6px;top:249.46px;font-size:16px;line-height:16px;color:#40e090">RS Rx. Quality</div>
<div class="t" style="left:220px;top:249.46px;font-size:16px;line-height:16px;color:#40e090">=</div>
<div class="t" style="left:238px;top:249.46px;font-size:16px;line-height:16px;color:#40e090">-9.692</div>
<div class="r" style="left:2px;top:271px;width:362px;height:1px;background:#40e090"></div>
<div class="t" style="left:6px;top:278.46px;font-size:16px;line-height:16px;color:#40e090">Freq Err</div>
<div class="t" style="left:220px;top:278.46px;font-size:16px;line-height:16px;color:#40e090">=</div>
<div class="t" style="left:238px;top:278.46px;font-size:16px;line-height:16px;color:#40e090">57.533</div>
<div class="t" style="left:6px;top:297.46px;font-size:16px;line-height:16px;color:#40e090">SyncCorr</div>
<div class="t" style="left:220px;top:297.46px;font-size:16px;line-height:16px;color:#40e090">=</div>
<div class="t" style="left:238px;top:297.46px;font-size:16px;line-height:16px;color:#40e090">99.407</div>
<div class="t" style="left:6px;top:316.46px;font-size:16px;line-height:16px;color:#40e090">Common Tracking Error</div>
<div class="t" style="left:220px;top:316.46px;font-size:16px;line-height:16px;color:#40e090">=</div>
<div class="t" style="left:238px;top:316.46px;font-size:16px;line-height:16px;color:#40e090">72.714</div>
</div>
<div style="position:absolute;left:1200px;top:499px;width:92px;height:328px;overflow:hidden">
<div class="t" style="left:47.5px;top:40.46px;font-size:16px;line-height:16px;color:#40e090">m%rms</div>
<div class="t" style="left:84px;top:59.46px;font-size:16px;line-height:16px;color:#40e090">%</div>
<div class="t" style="left:47.5px;top:78.46px;font-size:16px;line-height:16px;color:#40e090">m%rms</div>
<div class="t" style="left:47.5px;top:154.46px;font-size:16px;line-height:16px;color:#40e090">m%rms</div>
<div class="t" style="left:65px;top:173.46px;font-size:16px;line-height:16px;color:#40e090">dBm</div>
<div class="t" style="left:65px;top:211.46px;font-size:16px;line-height:16px;color:#40e090">dBm</div>
<div class="t" style="left:65px;top:230.46px;font-size:16px;line-height:16px;color:#40e090">dBm</div>
<div class="t" style="left:74px;top:249.46px;font-size:16px;line-height:16px;color:#40e090">dB</div>
<div class="t" style="left:77px;top:278.46px;font-size:16px;line-height:16px;color:#40e090">Hz</div>
<div class="t" style="left:84px;top:297.46px;font-size:16px;line-height:16px;color:#40e090">%</div>
<div class="t" style="left:47.5px;top:316.46px;font-size:16px;line-height:16px;color:#40e090">m%rms</div>
</div>
<div class="r" style="left:905px;top:499px;width:17px;height:328px;background:#fdfdf8;border-left:1px solid #f4f4ee;border-right:2px solid #c8c6bc;"></div>
<div class="r" style="left:907px;top:500px;width:14px;height:15px;background:linear-gradient(90deg,#c4d4f8,#b4c8f2);border:1px solid #eef3ff;border-radius:2px;"></div>
<svg style="left:907px;top:500px" width="14" height="15"><path d="M3.5 9.5 L7 6 L10.5 9.5" fill="none" stroke="#4d6185" stroke-width="2"/></svg>
<div class="r" style="left:907px;top:516px;width:14px;height:275px;background:linear-gradient(90deg,#c6d4fc,#c0d0fc 60%,#b4c6f4);border:1px solid #f0f4ff;border-bottom-color:#9aa8c8;border-radius:2px;"></div>
<div class="r" style="left:910px;top:649px;width:8px;height:1px;background:#8ea2d8;"></div>
<div class="r" style="left:910px;top:651px;width:8px;height:1px;background:#8ea2d8;"></div>
<div class="r" style="left:910px;top:653px;width:8px;height:1px;background:#8ea2d8;"></div>
<div class="r" style="left:910px;top:655px;width:8px;height:1px;background:#8ea2d8;"></div>
<div class="r" style="left:907px;top:811px;width:14px;height:15px;background:linear-gradient(90deg,#c4d4f8,#b4c8f2);border:1px solid #eef3ff;border-radius:2px;"></div>
<svg style="left:907px;top:811px" width="14" height="15"><path d="M3.5 5.5 L7 9 L10.5 5.5" fill="none" stroke="#4d6185" stroke-width="2"/></svg>
<div class="r" style="left:450px;top:827px;width:455px;height:16px;background:#fdfdf8;border-top:1px solid #f4f4ee;border-bottom:1px solid #c8c6bc;"></div>
<div class="r" style="left:451px;top:828px;width:15px;height:14px;background:linear-gradient(#c4d4f8,#b4c8f2);border:1px solid #eef3ff;border-radius:2px;"></div>
<svg style="left:451px;top:828px" width="15" height="14"><path d="M9 3.5 L5.5 7 L9 10.5" fill="none" stroke="#4d6185" stroke-width="2"/></svg>
<div class="r" style="left:466px;top:828px;width:347px;height:14px;background:linear-gradient(#c6d4fc,#c0d0fc 60%,#b4c6f4);border:1px solid #f0f4ff;border-right-color:#9aa8c8;border-radius:2px;"></div>
<div class="r" style="left:635px;top:831px;width:1px;height:8px;background:#8ea2d8;"></div>
<div class="r" style="left:637px;top:831px;width:1px;height:8px;background:#8ea2d8;"></div>
<div class="r" style="left:639px;top:831px;width:1px;height:8px;background:#8ea2d8;"></div>
<div class="r" style="left:641px;top:831px;width:1px;height:8px;background:#8ea2d8;"></div>
<div class="r" style="left:889px;top:828px;width:15px;height:14px;background:linear-gradient(#c4d4f8,#b4c8f2);border:1px solid #eef3ff;border-radius:2px;"></div>
<svg style="left:889px;top:828px" width="15" height="14"><path d="M6 3.5 L9.5 7 L6 10.5" fill="none" stroke="#4d6185" stroke-width="2"/></svg>
<div class="r" style="left:1292px;top:499px;width:17px;height:328px;background:#fdfdf8;border-left:1px solid #f4f4ee;border-right:2px solid #c8c6bc;"></div>
<div class="r" style="left:1294px;top:500px;width:14px;height:15px;background:linear-gradient(90deg,#c4d4f8,#b4c8f2);border:1px solid #eef3ff;border-radius:2px;"></div>
<svg style="left:1294px;top:500px" width="14" height="15"><path d="M3.5 9.5 L7 6 L10.5 9.5" fill="none" stroke="#4d6185" stroke-width="2"/></svg>
<div class="r" style="left:1294px;top:516px;width:14px;height:178px;background:linear-gradient(90deg,#c6d4fc,#c0d0fc 60%,#b4c6f4);border:1px solid #f0f4ff;border-bottom-color:#9aa8c8;border-radius:2px;"></div>
<div class="r" style="left:1297px;top:601px;width:8px;height:1px;background:#8ea2d8;"></div>
<div class="r" style="left:1297px;top:603px;width:8px;height:1px;background:#8ea2d8;"></div>
<div class="r" style="left:1297px;top:605px;width:8px;height:1px;background:#8ea2d8;"></div>
<div class="r" style="left:1297px;top:607px;width:8px;height:1px;background:#8ea2d8;"></div>
<div class="r" style="left:1294px;top:811px;width:14px;height:15px;background:linear-gradient(90deg,#c4d4f8,#b4c8f2);border:1px solid #eef3ff;border-radius:2px;"></div>
<svg style="left:1294px;top:811px" width="14" height="15"><path d="M3.5 5.5 L7 9 L10.5 5.5" fill="none" stroke="#4d6185" stroke-width="2"/></svg>
<div class="r" style="left:928px;top:827px;width:364px;height:16px;background:#fdfdf8;border-top:1px solid #f4f4ee;border-bottom:1px solid #c8c6bc;"></div>
<div class="r" style="left:929px;top:828px;width:15px;height:14px;background:linear-gradient(#c4d4f8,#b4c8f2);border:1px solid #eef3ff;border-radius:2px;"></div>
<svg style="left:929px;top:828px" width="15" height="14"><path d="M9 3.5 L5.5 7 L9 10.5" fill="none" stroke="#4d6185" stroke-width="2"/></svg>
<div class="r" style="left:946px;top:828px;width:210px;height:14px;background:linear-gradient(#c6d4fc,#c0d0fc 60%,#b4c6f4);border:1px solid #f0f4ff;border-right-color:#9aa8c8;border-radius:2px;"></div>
<div class="r" style="left:1047px;top:831px;width:1px;height:8px;background:#8ea2d8;"></div>
<div class="r" style="left:1049px;top:831px;width:1px;height:8px;background:#8ea2d8;"></div>
<div class="r" style="left:1051px;top:831px;width:1px;height:8px;background:#8ea2d8;"></div>
<div class="r" style="left:1053px;top:831px;width:1px;height:8px;background:#8ea2d8;"></div>
<div class="r" style="left:1276px;top:828px;width:15px;height:14px;background:linear-gradient(#c4d4f8,#b4c8f2);border:1px solid #eef3ff;border-radius:2px;"></div>
<svg style="left:1276px;top:828px" width="15" height="14"><path d="M6 3.5 L9.5 7 L6 10.5" fill="none" stroke="#4d6185" stroke-width="2"/></svg>
<div class="r" style="left:1315px;top:134px;width:156px;height:712px;background:#3566a0;border-right:1px solid #e8eef8;"></div>
<div class="r" style="left:1315px;top:134px;width:155px;height:40px;background:linear-gradient(#14243c 0px,#2a5280 3px,#3a6a9e 7px,#3a6a9e 100%);"></div>
<div class="t" style="left:1193px;width:400px;text-align:center;top:145.46px;font-size:16px;line-height:16px;color:#f4f8ff;font-weight:bold;">Measurements</div>
<div class="r" style="left:1315px;top:174px;width:155px;height:81px;background:linear-gradient(#fbfdff 0px,#eef7fd 4px,#a8d6f0 8px,#7abfe4 12px,#72b8df 66px,#5ca4d0 72px,#2e74a8 81px);"></div>
<div class="t" style="right:454px;top:193.34px;font-size:18.5px;line-height:18.5px;color:#0a0f1a;font-weight:bold;">Transmit On/Off</div>
<div class="t" style="right:454px;top:220.34px;font-size:18.5px;line-height:18.5px;color:#0a0f1a;font-weight:bold;">Power</div>
<div class="r" style="left:1315px;top:269px;width:155px;height:81px;background:linear-gradient(#fbfdff 0px,#f0f8fd 5px,#d4ebf8 9px,#c6e3f5 12px,#c6e3f5 66px,#a8d2ec 72px,#4a92c0 81px);"></div>
<div class="t" style="right:454px;top:288.34px;font-size:18.5px;line-height:18.5px;color:#0a0f1a;font-weight:bold;">Modulation</div>
<div class="t" style="right:454px;top:315.34px;font-size:18.5px;line-height:18.5px;color:#0a0f1a;font-weight:bold;">Analysis</div>
<div class="r" style="left:1315px;top:364px;width:155px;height:81px;background:linear-gradient(#fbfdff 0px,#eef7fd 4px,#a8d6f0 8px,#7abfe4 12px,#72b8df 66px,#5ca4d0 72px,#2e74a8 81px);"></div>
<div class="t" style="right:454px;top:383.34px;font-size:18.5px;line-height:18.5px;color:#0a0f1a;font-weight:bold;">Monitor</div>
<div class="t" style="right:454px;top:410.34px;font-size:18.5px;line-height:18.5px;color:#0a0f1a;font-weight:bold;">Spectrum</div>
<div class="r" style="left:1315px;top:459px;width:155px;height:81px;background:linear-gradient(#fbfdff 0px,#eef7fd 4px,#a8d6f0 8px,#7abfe4 12px,#72b8df 66px,#5ca4d0 72px,#2e74a8 81px);"></div>
<div class="t" style="right:454px;top:491.34px;font-size:18.5px;line-height:18.5px;color:#0a0f1a;font-weight:bold;">IQ Waveform</div>
<div class="r" style="left:1315px;top:554px;width:155px;height:81px;background:linear-gradient(#fbfdff 0px,#eef7fd 4px,#a8d6f0 8px,#7abfe4 12px,#72b8df 66px,#5ca4d0 72px,#2e74a8 81px);"></div>
<div class="t" style="right:454px;top:573.34px;font-size:18.5px;line-height:18.5px;color:#0a0f1a;font-weight:bold;">Conformance</div>
<div class="t" style="right:454px;top:600.34px;font-size:18.5px;line-height:18.5px;color:#0a0f1a;font-weight:bold;">EVM</div>
<div class="r" style="left:1315px;top:744px;width:155px;height:81px;background:linear-gradient(#fbfdff 0px,#eef7fd 4px,#a8d6f0 8px,#7abfe4 12px,#72b8df 66px,#5ca4d0 72px,#2e74a8 81px);"></div>
<div class="t" style="right:454px;top:762.92px;font-size:19px;line-height:19px;color:#0a0f1a;font-weight:bold;">More</div>
<div class="t" style="right:454px;top:790.46px;font-size:16px;line-height:16px;color:#0a0f1a;font-weight:bold;">2 of 2</div>
<div class="r" style="left:1315px;top:825px;width:155px;height:21px;background:linear-gradient(#36679c 0px,#36679c 12px,#1c3048 21px);"></div>
<div class="r" style="left:448px;top:846px;width:1024px;height:30px;background:#e8e5e5;border-top:2px solid #8c8880;border-bottom:2px solid #8c8880;"></div>
<div class="r" style="left:478px;top:848px;width:1px;height:26px;background:#b8b4a8;"></div>
<div class="r" style="left:1098px;top:848px;width:1px;height:26px;background:#b8b4a8;"></div>
<div class="r" style="left:1146px;top:848px;width:1px;height:26px;background:#b8b4a8;"></div>
<div class="t" style="left:450px;top:854.84px;font-size:12px;line-height:12px;color:#303030;font-weight:normal;letter-spacing:-0.4px;">MSG</div>
<div class="t" style="left:1100px;top:854.84px;font-size:12px;line-height:12px;color:#303030;font-weight:normal;letter-spacing:-0.4px;">STATUS</div>
</body></html>
